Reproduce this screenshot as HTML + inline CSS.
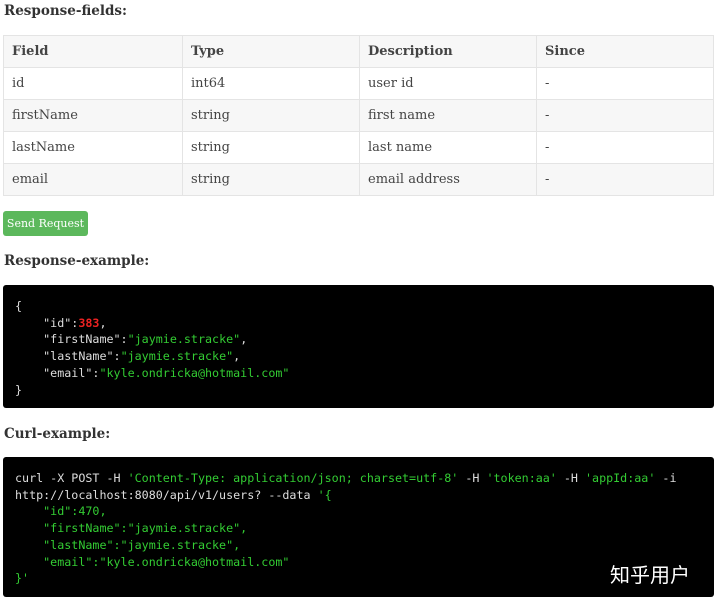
<!DOCTYPE html>
<html><head><meta charset="utf-8"><style>
body{margin:0;background:#fff;font-family:"DejaVu Serif","Liberation Serif",serif;color:#333;width:720px;height:600px;overflow:hidden;position:relative}
.h{position:absolute;left:4px;font-weight:bold;font-size:13.5px;color:#333}
table{position:absolute;left:3px;top:35px;border-collapse:collapse;width:711px;font-size:13px}
td,th{border:1px solid #e4e4e4;height:31px;padding:0 0 0 8px;text-align:left;color:#444}
th{font-weight:bold;height:31px;background:#f7f7f7}
tr:nth-child(odd) td{background:#f7f7f7}
.btn{position:absolute;left:3px;top:211px;width:85px;height:25px;background:#5cb85c;color:#fff;border-radius:3px;font-size:11px;line-height:25px;text-align:center}
pre{position:absolute;left:3px;width:711px;margin:0;background:#000;color:#ddd;border-radius:3px;font-family:"DejaVu Sans Mono","Liberation Mono",monospace;font-size:11.7px;line-height:16.7px;padding:0 0 0 12px;box-sizing:border-box}
.g{color:#3c3}.r{color:#e22;font-weight:bold}
</style></head><body>
<div class="h" style="top:3px">Response-fields:</div>
<table>
<tr><th style="width:170px">Field</th><th style="width:168px">Type</th><th style="width:168px">Description</th><th>Since</th></tr>
<tr><td>id</td><td>int64</td><td>user id</td><td>-</td></tr>
<tr><td>firstName</td><td>string</td><td>first name</td><td>-</td></tr>
<tr><td>lastName</td><td>string</td><td>last name</td><td>-</td></tr>
<tr><td>email</td><td>string</td><td>email address</td><td>-</td></tr>
</table>
<div class="btn">Send Request</div>
<div class="h" style="top:253px">Response-example:</div>
<pre style="top:285px;height:123px;padding-top:13px">{
    "id":<span class="r">383</span>,
    "firstName":<span class="g">"jaymie.stracke"</span>,
    "lastName":<span class="g">"jaymie.stracke"</span>,
    "email":<span class="g">"kyle.ondricka@hotmail.com"</span>
}</pre>
<div class="h" style="top:426px">Curl-example:</div>
<pre style="top:457px;height:140px;padding-top:13px">curl -X POST -H <span class="g">'Content-Type: application/json; charset=utf-8'</span> -H <span class="g">'token:aa'</span> -H <span class="g">'appId:aa'</span> -i
http://localhost:8080/api/v1/users? --data <span class="g">'{
    "id":470,
    "firstName":"jaymie.stracke",
    "lastName":"jaymie.stracke",
    "email":"kyle.ondricka@hotmail.com"
}'</span></pre>
<div style="position:absolute;left:610px;top:560px;color:#fff;font-size:20px;font-family:'Noto Sans CJK SC',sans-serif;line-height:28px">知乎用户</div>
</body></html>
